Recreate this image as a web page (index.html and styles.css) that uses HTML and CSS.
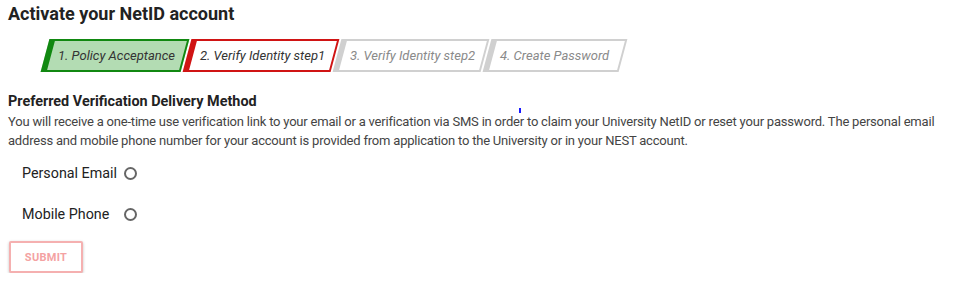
FILE: index.html
```html
<!DOCTYPE html>
<html>
<head>
<meta charset="utf-8">
<link rel="stylesheet" href="styles.css">
</head>
<body>
<h1 class="title">Activate your NetID account</h1>
<div class="steps">
  <div class="step done"><span>1. Policy Acceptance</span></div>
  <div class="step current"><span>2. Verify Identity step1</span></div>
  <div class="step todo"><span>3. Verify Identity step2</span></div>
  <div class="step todo"><span>4. Create Password</span></div>
</div>
<div class="section">
  <h2 class="heading">Preferred Verification Delivery Method</h2>
  <p class="desc">You will receive a one-time use verification link to your email or a verification via SMS in order to claim your University NetID or reset your password. The personal email address and mobile phone number for your account is provided from application to the University or in your NEST account.<i class="caret"></i></p>
  <div class="options">
    <label class="option"><span class="opt-label">Personal Email</span><span class="radio"></span></label>
    <label class="option"><span class="opt-label">Mobile Phone</span><span class="radio"></span></label>
  </div>
  <button class="submit">SUBMIT</button>
</div>
</body>
</html>
```
FILE: styles.css
```css
body {
  margin: 0;
  padding: 0 8px;
  font-family: Roboto, "Liberation Sans", sans-serif;
  color: #333;
  background: #fff;
}
.title {
  margin: 0;
  padding-top: 3px;
  font-size: 18px;
  font-weight: 700;
  color: #222;
  line-height: 22px;
}
.steps {
  display: flex;
  gap: 2px;
  margin: 14px 0 0 37px;
  height: 33px;
}
.step {
  box-sizing: border-box;
  flex-shrink: 0;
  height: 33px;
  transform: skewX(-15deg);
  border: 2px solid #ccc;
  border-left-width: 6px;
  background: #fff;
  display: flex;
  align-items: center;
}
.step span {
  display: block;
  transform: skewX(15deg);
  font-style: italic;
  font-size: 13px;
  color: #333;
  padding: 0 8px 0 7px;
  white-space: nowrap;
}
.step.done {
  background: #b3dcb3;
  border-color: #118811;
}
.step.current {
  border-color: #d01414;
}
.step.todo {
  border-color: #d0d0d0;
}
.step.todo span { color: #8a8a8a; }
.step:last-child span { padding-right: 12px; }
.section {
  margin-top: 21px;
}
.heading {
  margin: 0;
  font-size: 14.4px;
  font-weight: 700;
  color: #222;
  line-height: 17px;
}
.desc {
  position: relative;
  margin: 2px 0 0;
  font-size: 13px;
  letter-spacing: -0.2px;
  line-height: 19px;
  color: #444;
}
.caret {
  position: absolute;
  left: 511px;
  top: -4px;
  width: 2px;
  height: 5px;
  background: #1a1aff;
}
.options {
  margin-top: 13px;
  padding-left: 14px;
  display: flex;
  flex-direction: column;
  gap: 21px;
}
.option {
  display: flex;
  align-items: center;
  height: 20px;
}
.opt-label {
  width: 102px;
  font-size: 14.3px;
  color: #222;
}
.radio {
  box-sizing: border-box;
  width: 13px;
  height: 13px;
  border: 2px solid #666;
  border-radius: 50%;
}
.submit {
  display: block;
  margin-top: 17px;
  margin-left: 1px;
  width: 74px;
  height: 32px;
  background: #fff;
  border: 2px solid #f5b0b0;
  border-radius: 2px;
  color: #f4a2a2;
  font-family: Roboto, "Liberation Sans", sans-serif;
  font-weight: 700;
  font-size: 11px;
  letter-spacing: 0.3px;
  box-shadow: 0 1px 3px rgba(0,0,0,0.25);
}
```
